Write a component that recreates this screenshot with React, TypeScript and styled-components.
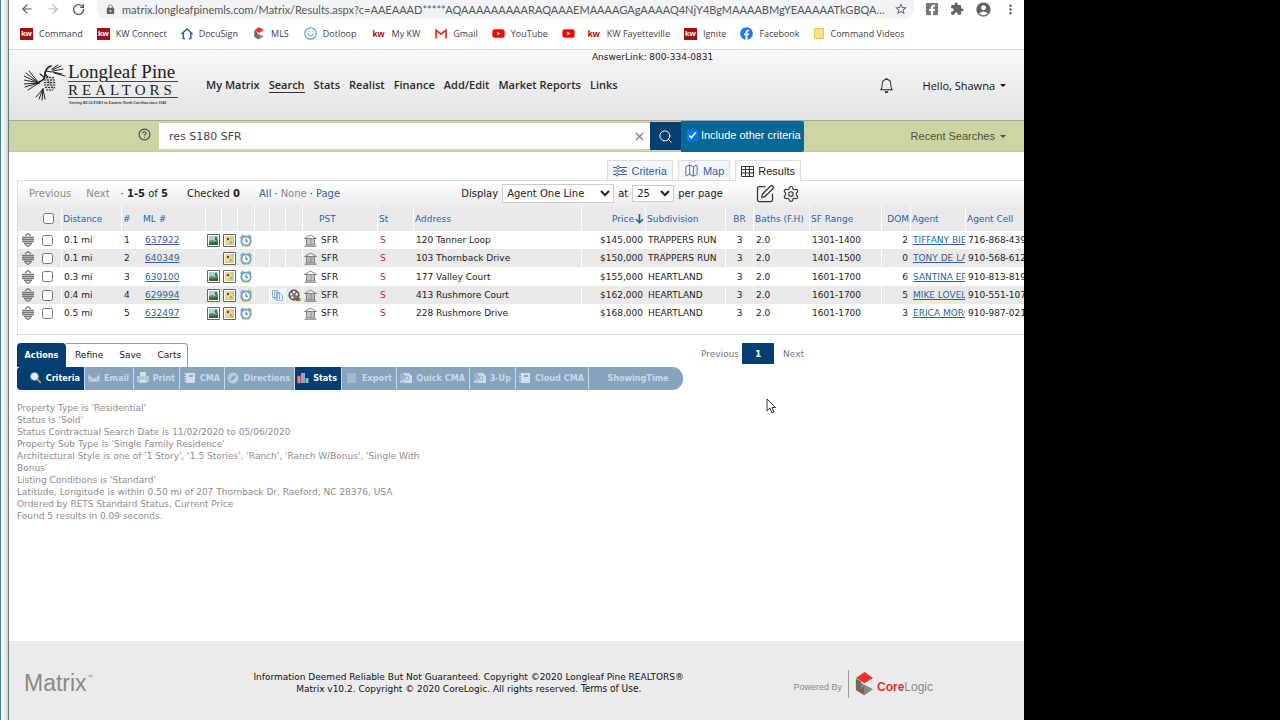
import React from 'react';
import styled, { createGlobalStyle, css } from 'styled-components';
import { ArrowLeft, ArrowRight, RotateCw, Search, X, Map as MapIcon, CircleHelp, SquarePen, Settings } from 'lucide-react';
import { MdLock, MdStarBorder, MdExtension, MdAccountCircle, MdMoreVert } from 'react-icons/md';
import { FaFacebookSquare, FaFacebook, FaYoutube } from 'react-icons/fa';
import { BsBell } from 'react-icons/bs';

const verdana = "'DejaVu Sans', Verdana, sans-serif";
const tahoma = "'DejaVu Sans Condensed', Tahoma, sans-serif";
const segoe = "'Open Sans', 'Segoe UI', sans-serif";
const arial = "'Liberation Sans', Arial, sans-serif";
const navy = '#053f72';
const link = '#2d62a8';

const GlobalStyle = createGlobalStyle`
  * { box-sizing: border-box; }
  body { margin: 0; background: #000; font-family: ${verdana}; font-size: 9px; color: #222; }
  button { font: inherit; color: inherit; background: none; border: 0; padding: 0; cursor: pointer; }
  a { color: inherit; text-decoration: none; }
  svg { display: block; flex: none; }
  input[type='checkbox'] { margin: 0; width: 11px; height: 11px; }
`;

const Screen = styled.div`
  display: grid;
  grid-template-columns: 9px minmax(0, 1fr) 20%;
  min-height: 100vh;
  overflow: hidden;
`;
const DesktopEdge = styled.div`
  border-left: 1px solid #4d7f92;
  border-right: 1px solid #757575;
  background: linear-gradient(90deg, #f4f6f8 0, #e9ebee 60%, #c9cbce 100%);
`;
const Browser = styled.div`
  display: flex;
  flex-direction: column;
  background: #fff;
`;

/* Browser chrome */
const AddressRow = styled.div`
  display: flex;
  align-items: center;
  height: 18px;
  padding: 0 6px 0 11px;
  color: #5f6368;
`;
const ChromeButton = styled.button<{ $dim?: boolean }>`
  display: flex;
  margin-right: 12px;
  color: ${(p) => (p.$dim ? '#b5b7ba' : '#55585c')};
`;
const AddressPill = styled.div`
  display: flex;
  flex: 1;
  align-items: center;
  min-width: 0;
  height: 20px;
  padding: 0 6px 0 8px;
  gap: 6px;
  background: #f1f3f4;
  border-radius: 0 0 10px 10px;
`;
const AddressInput = styled.input`
  flex: 1;
  min-width: 0;
  height: 18px;
  border: 0;
  padding: 0;
  background: none;
  color: #54575b;
  font: 11px Lato, sans-serif;
  text-overflow: ellipsis;
`;
const ChromeIcons = styled.div`
  display: flex;
  align-items: center;
  gap: 11px;
  margin-left: 11px;
  color: #5f6368;
`;
const Bookmarks = styled.nav`
  display: flex;
  align-items: center;
  height: 32px;
  padding: 0 11px;
  border-bottom: 1px solid #dcdcdc;
  font: 9px ${segoe};
  color: #3f4246;
`;
const Bookmark = styled.a<{ $gap: number }>`
  display: flex;
  align-items: center;
  gap: 6px;
  margin-right: ${(p) => p.$gap}px;
  white-space: nowrap;
`;
const KwMark = styled.span<{ $boxed?: boolean }>`
  display: grid;
  place-items: center;
  width: 13px;
  height: 12px;
  font: bold 8px ${arial};
  line-height: 10px;
  ${(p) =>
    p.$boxed
      ? css`
          background: #a90b12;
          color: #fff;
        `
      : css`
          width: 14px;
          color: #b40101;
          font-size: 9px;
        `}
`;
const NoteIcon = styled.span`
  width: 10px;
  height: 11px;
  background: #fbe283;
  border: 1px solid #e5c65c;
`;

/* Site header */
const Header = styled.header`
  padding-bottom: 12px;
  border-bottom: 1px solid #a7a99a;
  background: linear-gradient(#f7f7f7, #e3e3e4);
`;
const AnswerLink = styled.div`
  padding: 2px 0 0 272px;
  text-align: center;
  line-height: 10px;
`;
const HeaderRow = styled.div`
  display: flex;
  align-items: center;
  height: 46px;
  padding: 0 18px 0 15px;
`;
const MainNav = styled.nav`
  display: flex;
  gap: 9px;
  margin-left: 22px;
  font: 600 11px ${segoe};
  color: #2a2a2a;
`;
const NavLink = styled.a<{ $active?: boolean }>`
  line-height: 15px;
  border-bottom: 1px solid ${(p) => (p.$active ? '#333' : 'transparent')};
`;
const HeaderTools = styled.div`
  display: flex;
  align-items: center;
  gap: 29px;
  margin-left: auto;
`;
const Menu = styled.button<{ $sans?: boolean }>`
  display: flex;
  align-items: center;
  gap: 5px;
  font: ${(p) => (p.$sans ? `11px ${arial}` : `500 11px ${segoe}`)};
  color: ${(p) => (p.$sans ? '#4d5238' : '#111')};
  &::after {
    content: '';
    border: 3px solid transparent;
    border-top-color: currentColor;
    border-bottom: 0;
  }
`;

/* Speed search */
const SpeedBar = styled.form`
  display: flex;
  align-items: center;
  height: 31px;
  padding: 0 18px 0 129px;
  background: #ccd4a4;
  border-bottom: 1px solid #c3c9a8;
`;
const HelpButton = styled.button`
  margin: 0 8px 3px 0;
  color: #444;
`;
const SpeedField = styled.div`
  display: flex;
  flex: 1;
  align-items: center;
  height: 26px;
  padding: 0 4px 0 10px;
  background: #fff;
  color: #777;
`;
const SpeedInput = styled.input`
  flex: 1;
  min-width: 0;
  border: 0;
  padding: 0;
  outline: 0;
  font: 11px ${verdana};
  color: #444;
`;
const SearchButton = styled.button`
  display: grid;
  place-items: center;
  width: 31px;
  height: 28px;
  background: ${navy};
  color: #fff;
`;
const IncludeLabel = styled.label`
  display: flex;
  align-items: center;
  gap: 3px;
  height: 31px;
  padding: 0 3px 2px 6px;
  margin-right: 107px;
  background: #066799;
  border-radius: 0 2px 2px 0;
  color: #fff;
  font: 11px ${arial};
  white-space: nowrap;
`;

/* Results */
const Main = styled.main`
  flex: 1;
  padding: 8px 0 24px 8px;
`;
const ViewTabs = styled.div`
  display: flex;
  justify-content: flex-end;
  gap: 5px;
  padding-right: 223px;
`;
const ViewTab = styled.button<{ $active?: boolean }>`
  display: flex;
  align-items: center;
  gap: 4px;
  height: ${(p) => (p.$active ? 21 : 20)}px;
  padding: 0 5px;
  margin-bottom: ${(p) => (p.$active ? -1 : 0)}px;
  border: 1px solid #ddd;
  border-bottom: 0;
  background: ${(p) => (p.$active ? '#fff' : '#f6f6f8')};
  color: ${(p) => (p.$active ? '#222' : link)};
  font: 11px ${arial};
`;
const Panel = styled.section`
  padding-bottom: 12px;
  border: 1px solid #dcdcdc;
  border-right: 0;
  overflow: hidden;
`;
const Toolbar = styled.div`
  display: flex;
  align-items: center;
  height: 25px;
  padding: 0 224px 0 11px;
  background: linear-gradient(#fff, #ececec);
  font-size: 10px;
  white-space: nowrap;
`;
const PageButton = styled.button<{ $gap: number }>`
  margin-right: ${(p) => p.$gap}px;
  color: #8a8a8a;
`;
const Count = styled.span`
  margin-right: 19px;
`;
const PickLinks = styled.div`
  display: flex;
  gap: 3px;
`;
const PickLink = styled.a<{ $muted?: boolean }>`
  color: ${(p) => (p.$muted ? '#888' : link)};
`;
const DisplayTools = styled.div`
  display: flex;
  align-items: center;
  gap: 4px;
  margin-left: auto;
`;
const Picker = styled.select<{ $size: 'wide' | 'small' }>`
  width: ${(p) => (p.$size === 'wide' ? 112 : 42)}px;
  height: ${(p) => (p.$size === 'wide' ? 19 : 17)}px;
  padding: 0;
  border: 1px solid #ccc;
  background: #fff;
  color: #222;
  font: 10px ${verdana};
`;
const ToolIcons = styled.div`
  display: flex;
  align-items: center;
  gap: 7px;
  margin-left: 28px;
  color: #333;
`;

/* Results are wider than the window: the last column runs off its edge. */
const Grid = styled.table`
  width: calc(100% + 16px);
  table-layout: fixed;
  border-collapse: separate;
  border-spacing: 0;
  white-space: nowrap;
`;
const Col = styled.col<{ $w?: number }>`
  width: ${(p) => (p.$w ? `${p.$w}px` : 'auto')};
`;
type CellProps = { $align?: 'left' | 'right' | 'center'; $gap?: boolean };
const Th = styled.th<CellProps>`
  height: 25px;
  padding: 0 1px;
  overflow: hidden;
  background: #e9e9e9;
  border-left: ${(p) => (p.$gap === false ? 0 : 1)}px solid #fff;
  color: ${link};
  font-weight: normal;
  text-align: ${(p) => p.$align ?? 'left'};
`;
const Tr = styled.tr`
  height: 18px;
  &:nth-child(even) { background: #e9e9e9; }
  &:nth-child(3n) { height: 19px; }
`;
const Td = styled.td<CellProps>`
  padding: 0 2px 0 ${(p) => (p.$gap ? 2 : 3)}px;
  overflow: hidden;
  border-left: ${(p) => (p.$gap ? '1px solid #fff' : 0)};
  text-align: ${(p) => p.$align ?? 'left'};
  line-height: 12px;
`;
const IconTd = styled(Td)`
  padding: 0;
  & > svg { margin: 0 auto; }
`;
const RowLink = styled.a`
  color: ${link};
  text-decoration: underline;
`;
const Sold = styled.span`
  color: #c01848;
`;
const CheckCell = styled.span`
  display: flex;
  padding-left: 4px;
`;
const SortLabel = styled.span`
  display: flex;
  align-items: center;
  justify-content: flex-end;
  gap: 1px;
`;

/* Actions and pager */
const BottomBar = styled.div`
  display: flex;
  align-items: flex-start;
  margin-top: 8px;
`;
const Actions = styled.div`
  width: 666px;
`;
const ActionTabs = styled.div`
  display: flex;
  height: 24px;
`;
const ActionTab = styled.button`
  width: 49px;
  border-radius: 4px 4px 0 0;
  background: ${navy};
  color: #fff;
  font: bold 9px ${tahoma};
`;
const OtherTabs = styled.div`
  display: flex;
  gap: 16px;
  padding: 0 6px 1px 9px;
  border: 1px solid #999;
  border-width: 1px 1px 0 0;
  border-radius: 0 4px 0 0;
  color: #222;
`;
const ActionBar = styled.div`
  display: flex;
  height: 23px;
  gap: 1px;
  overflow: hidden;
  border-radius: 4px 11px 11px 4px;
  background: #c9d9e6;
`;
const ActionButton = styled.button<{ $w?: number; $on?: boolean }>`
  display: flex;
  flex: ${(p) => (p.$w ? `0 0 ${p.$w}px` : '1')};
  align-items: center;
  justify-content: ${(p) => (p.$w ? 'flex-end' : 'center')};
  gap: 4px;
  padding: ${(p) => (p.$w ? '0 4px 1px 0' : '0 0 1px 4px')};
  background: ${(p) => (p.$on ? navy : '#88a3bd')};
  color: ${(p) => (p.$on ? '#fff' : '#c8d9e8')};
  font: bold 9px ${tahoma};
  white-space: nowrap;
`;
const Pager = styled.div`
  display: flex;
  align-items: center;
  height: 21px;
  margin-left: 18px;
  color: #777;
`;
const PageNumber = styled.button`
  width: 32px;
  height: 21px;
  margin: 0 9px 0 3px;
  background: ${navy};
  color: #fff;
  font-weight: bold;
`;
const Criteria = styled.div`
  max-width: 410px;
  margin-top: 12px;
  color: #8c8c8c;
  line-height: 12px;
`;

/* Footer */
const Footer = styled.footer`
  display: flex;
  align-items: center;
  height: 79px;
  padding: 6px 91px 0 15px;
  background: #ebebeb;
`;
const MatrixMark = styled.div`
  display: flex;
  width: 120px;
  color: #8d8988;
  font: 23px ${arial};
`;
const Tm = styled.span`
  font-size: 6px;
  line-height: 14px;
`;
const Legal = styled.div`
  flex: 1;
  padding-bottom: 2px;
  color: #111;
  line-height: 12px;
  text-align: center;
`;
const Terms = styled.a`
  font-size: 10px;
  font-family: ${tahoma};
`;
const Powered = styled.div`
  display: flex;
  align-items: center;
  gap: 6px;
  color: #8a8a8a;
  font: 9px ${arial};
`;
const PoweredText = styled.span`
  padding-top: 6px;
`;
const CoreLogo = styled.div`
  display: flex;
  align-items: center;
  gap: 3px;
  height: 28px;
  padding-left: 6px;
  border-left: 1px solid #999;
`;
const CoreName = styled.span`
  padding-top: 6px;
  font-size: 12px;
`;
const Core = styled.b`
  color: #e8332c;
`;
const Pointer = styled.svg`
  position: absolute;
  left: 766px;
  top: 398px;
`;

const PineLogo = () => (
  <svg width="160" height="46" viewBox="0 0 160 46" role="img" aria-label="Longleaf Pine Realtors">
    <g fill="none" stroke="#222" strokeWidth="1" strokeLinecap="round">
      <path d="M15 21 L0 14 M15 21 L2 11 M15 21 L5 9 M15 21 L0 18 M15 21 L0 22 M15 21 L1 25 M15 21 L4 28" />
      <path d="M19 27 L12 35 M19 27 L15 37 M19 27 L18 38 M19 27 L21 37" />
      <path d="M28 8 L37 4 M29 9 L39 7 M29 10 L38 12 M30 11 L41 14 M28 7 L34 3" />
      <path d="M15 20 Q22 18 21 11 Q22 6 27 4" strokeWidth="1.8" />
      <path d="M20 15 L16 12 M21 12 L25 16 M22 9 L28 10" strokeWidth="1.200" />
    </g>
    <ellipse cx="26" cy="22" rx="6" ry="7.500" fill="#d0d0d0" />
    <g fill="none" stroke="#333" strokeWidth="1" strokeDasharray="2 1">
      <path d="M22 15.500 H30 M20 18 H32 M20 20.500 H32 M20 23 H32 M21 25.500 H31 M22 28 H29" />
      <path d="M22 16 L31 28 M30 15 L21 27" strokeWidth=".6" />
    </g>
    <g fill="#222" fontFamily="'Liberation Serif', serif">
      <text x="44" y="16" fontSize="19">Longleaf Pine</text>
      <text x="44" y="33" fontSize="15" letterSpacing="4">REALTORS</text>
      <text x="45" y="42" fontSize="4" fontWeight="bold" fontStyle="italic" fill="#333">Serving REALTORS in Eastern North Carolina since 1946</text>
    </g>
    <path d="M44 19.500 H74 M82 19.500 H154 M44 35.500 H154" stroke="#444" />
  </svg>
);
const PhotoIcon = () => (
  <svg width="13" height="13" viewBox="0 0 13 13">
    <path d="M.5.5h12v12H.5z" fill="#fff" stroke="#666" />
    <path d="M2 2h9v9H2z" fill="#a9cfe6" />
    <path d="M2 7l3-1 3 1 3-2v6H2z" fill="#4d9a45" />
    <path d="M2 9l9-1v3H2z" fill="#2a6a30" />
    <path d="M8 3h2v3H8z" fill="#2f7a2c" />
  </svg>
);
const MapPinIcon = () => (
  <svg width="13" height="13" viewBox="0 0 13 13">
    <path d="M.5.5h12v12H.5z" fill="#fff" stroke="#666" />
    <path d="M2 2h9v9H2z" fill="#e6df86" />
    <path d="M7 2h4v5H9z" fill="#b6c9d6" />
    <path d="M2 11l9-4v4z" fill="#c5d08a" />
    <circle cx="5" cy="5" r="1.200" fill="#a3231c" />
    <path d="M7 7h2v2H7z" fill="#e09a3c" />
  </svg>
);
const ClockIcon = () => (
  <svg width="14" height="13" viewBox="0 0 14 13">
    <path d="M1.500 4l3-3" stroke="#8db4d8" strokeWidth="2.200" />
    <path d="M12.500 4l-3-3" stroke="#a9c25a" strokeWidth="2.200" />
    <circle cx="7" cy="7" r="4.700" fill="#e8f3fc" stroke="#6b9cc8" strokeWidth="1.800" />
    <path d="M7 4.500v2.800h2" fill="none" stroke="#2f6ca8" strokeWidth=".9" />
    <path d="M3 11.500l8 0" stroke="#9cb94a" strokeWidth="1.400" />
  </svg>
);
const PagesIcon = () => (
  <svg width="13" height="13" viewBox="0 0 13 13">
    <path d="M0 0h13v13H0z" fill="#fbfcff" />
    <g fill="#eaf2fb" stroke="#84a9d3" strokeWidth=".9">
      <path d="M1.500 1.500h5v7h-5zM3.500 3h5v7h-5zM5.500 4.500h4l2 2v5h-6z" />
    </g>
  </svg>
);
const ReelIcon = () => (
  <svg width="13" height="13" viewBox="0 0 13 13">
    <circle cx="6" cy="6" r="5" fill="#777" stroke="#333" />
    <g fill="#eee"><circle cx="6" cy="3" r="1.200" /><circle cx="3.200" cy="5.200" r="1.200" /><circle cx="8.800" cy="5.200" r="1.200" /><circle cx="4.300" cy="8.500" r="1.200" /></g>
    <path d="M7 8h3v4H8z" fill="#c8472b" />
    <path d="M10 9h2.500v3H10z" fill="#5c9a2e" />
  </svg>
);
const BankIcon = () => (
  <svg width="13" height="13" viewBox="0 0 13 13" fill="none" stroke="#777" strokeWidth=".9">
    <path d="M.5 4.500L6.500 1l6 3.500zM.5 12.300h12M1.500 11h10M2.500 5v6M4 5v6M6 5v6M7.200 5v6M9 5v6M10.500 5v6" />
  </svg>
);
const DragIcon = () => (
  <svg width="12" height="14" viewBox="0 0 12 14">
    <path d="M3 3l3-2.500L9 3M3 11.500l3 2L9 11.500" fill="none" stroke="#777" strokeWidth="1.200" />
    <path d="M0 4.500h12M0 6.500h12M0 8.500h12M2 10.500h8" stroke="#777" strokeWidth="1.400" />
  </svg>
);
const CubeLogo = ({ w, h }: { w: number; h: number }) => (
  <svg width={w} height={h} viewBox="0 0 20 28">
    <path d="M10 0L20 7l-10 6L0 7z" fill="#f0302a" />
    <path d="M0 8l6 3v9l4-5v12L0 21z" fill="#7d6f68" />
    <path d="M10 15l10 5-10 7z" fill="#93877f" />
    <path d="M0 8l10 7v12L0 21z" fill="#6e625c" opacity=".7" />
  </svg>
);
const GmailIcon = () => (
  <svg width="12" height="10" viewBox="0 0 12 10">
    <path d="M1 1h10v8H1z" fill="#f3efee" />
    <path d="M1 9.500V1.200l5 4 5-4v8.300" fill="none" stroke="#d0392d" strokeWidth="1.700" />
  </svg>
);
const DocuIcon = () => (
  <svg width="12" height="12" viewBox="0 0 12 12" fill="none" stroke="#2365a5" strokeWidth="1.500">
    <path d="M4 10.500H2.200v-5L1 5.500 6 1l5 4.500H9.800v5H8" />
  </svg>
);
const DotloopIcon = () => (
  <svg width="13" height="13" viewBox="0 0 13 13" fill="none" stroke="#5aa5dc" strokeWidth="1.200">
    <circle cx="6.500" cy="6.500" r="5.700" />
    <path d="M3.500 6.500q3 5 6 0M4.500 4.500v.5M8.500 4.500v.5" />
  </svg>
);
const SlidersIcon = () => (
  <svg width="14" height="12" viewBox="0 0 14 12" fill="#fff" stroke="#2d62a8">
    <path d="M0 2.500h14M0 6h14M0 9.500h14" />
    <circle cx="5" cy="2.500" r="1.400" />
    <circle cx="10" cy="6" r="1.400" />
    <circle cx="4" cy="9.500" r="1.400" />
  </svg>
);
const TableIcon = () => (
  <svg width="13" height="11" viewBox="0 0 13 11" fill="none" stroke="#333">
    <path d="M.5.5h12v10H.5zM.5 3.500h12M.5 7h12M4.500.5v10M8.500.5v10" />
  </svg>
);
const SortArrow = () => (
  <svg width="9" height="10" viewBox="0 0 9 10" fill="none" stroke="#1d5fa0" strokeWidth="1.600">
    <path d="M4.500 0v8.500M1 5.200l3.500 3.500L8 5.200" />
  </svg>
);
const MagnifierIcon = () => (
  <svg width="12" height="12" viewBox="0 0 12 12">
    <path d="M7 7l4 4" stroke="#c78a55" strokeWidth="2" />
    <circle cx="4.500" cy="4.500" r="3.800" fill="#dceefb" stroke="#9fc0dd" />
  </svg>
);
const StatsIcon = () => (
  <svg width="12" height="12" viewBox="0 0 12 12">
    <path d="M.5 4h3v7h-3z" fill="#f0888a" stroke="#d8454a" />
    <path d="M4 1h4v10H4z" fill="#7da8ec" />
    <path d="M8.500 6h3v5h-3z" fill="#8fca88" />
  </svg>
);
const glyphs: Record<string, React.ReactNode> = {
  mail: <path d="M0 2h12v8H0zM0 2l6 4.500L12 2M0 10l4-4M12 10L8 6" fill="#c4d3e0" stroke="#93abc2" />,
  print: <><path d="M3 0h6v4H3z" fill="#d5e0e9" /><path d="M0 4h12v6H0z" fill="#b9cad9" /><path d="M2 7h8v4H2z" fill="#d9e3eb" stroke="#93abc2" strokeWidth=".6" /></>,
  book: <><path d="M2 1h9v10H2z" fill="#d3dee8" /><path d="M0 2h2M0 4.500h2M0 7h2M0 9.500h2" stroke="#c4d3e0" /><path d="M5 3h4v2H5z" fill="#8fa8c0" /></>,
  compass: <><circle cx="6" cy="6" r="5.500" fill="#bccdda" /><path d="M9 3L7 7 3 9l2-4z" fill="#7f9bb6" /></>,
  sheet: <path d="M1 1h9v10H1z" fill="#a3b9cd" />,
  report: <><path d="M3 1h6l3 3v7H3z" fill="#d0dce6" /><path d="M0 2h5v5H0z" fill="#9fb5ca" /><circle cx="7" cy="6" r="2" fill="none" stroke="#8ea8c0" /><path d="M0 8h5v3H0z" fill="#b9cad9" /></>,
};
const Glyph = ({ name }: { name: string }) => (
  <svg width="12" height="12" viewBox="0 0 12 12">{glyphs[name]}</svg>
);

const widths = [20, 23, 60, 21, 63, 16, 16, 17, 15, 16, 17, 16, 59, 36, 0, 64, 80, 28, 56, 72, 29, 55, 75];
const rows = [
  { d: '0.1 mi', ml: '637922', photo: true, addr: '120 Tanner Loop', price: '$145,000', sub: 'TRAPPERS RUN', sf: '1301-1400', dom: 2, agent: 'TIFFANY BIE', cell: '716-868-439' },
  { d: '0.1 mi', ml: '640349', photo: false, addr: '103 Thornback Drive', price: '$150,000', sub: 'TRAPPERS RUN', sf: '1401-1500', dom: 0, agent: 'TONY DE LA', cell: '910-568-612' },
  { d: '0.3 mi', ml: '630100', photo: true, addr: '177 Valley Court', price: '$155,000', sub: 'HEARTLAND', sf: '1601-1700', dom: 6, agent: 'SANTINA EP', cell: '910-813-819' },
  { d: '0.4 mi', ml: '629994', photo: true, extra: true, addr: '413 Rushmore Court', price: '$162,000', sub: 'HEARTLAND', sf: '1601-1700', dom: 5, agent: 'MIKE LOVEL', cell: '910-551-107' },
  { d: '0.5 mi', ml: '632497', photo: true, addr: '228 Rushmore Drive', price: '$168,000', sub: 'HEARTLAND', sf: '1601-1700', dom: 3, agent: 'ERICA MORG', cell: '910-987-021' },
];
const actions: { label: string; w?: number; on?: boolean; icon?: React.ReactNode }[] = [
  { label: 'Criteria', w: 67, on: true, icon: <MagnifierIcon /> },
  { label: 'Email', w: 48, icon: <Glyph name="mail" /> },
  { label: 'Print', w: 45, icon: <Glyph name="print" /> },
  { label: 'CMA', w: 44, icon: <Glyph name="book" /> },
  { label: 'Directions', w: 69, icon: <Glyph name="compass" /> },
  { label: 'Stats', w: 46, on: true, icon: <StatsIcon /> },
  { label: 'Export', w: 54, icon: <Glyph name="sheet" /> },
  { label: 'Quick CMA', w: 72, icon: <Glyph name="report" /> },
  { label: '3-Up', w: 45, icon: <Glyph name="report" /> },
  { label: 'Cloud CMA', w: 72, icon: <Glyph name="book" /> },
  { label: 'ShowingTime' },
];
const criteria = [
  "Property Type is 'Residential'",
  "Status is 'Sold'",
  'Status Contractual Search Date is 11/02/2020 to 05/06/2020',
  "Property Sub Type is 'Single Family Residence'",
  "Architectural Style is one of '1 Story', '1.5 Stories', 'Ranch', 'Ranch W/Bonus', 'Single With Bonus'",
  "Listing Conditions is 'Standard'",
  'Latitude, Longitude is within 0.50 mi of 207 Thornback Dr, Raeford, NC 28376, USA',
  'Ordered by RETS Standard Status, Current Price',
  'Found 5 results in 0.09 seconds.',
];

export default function App() {
  return (
    <Screen>
      <GlobalStyle />
      <DesktopEdge />
      <Browser>
        <AddressRow>
          <ChromeButton aria-label="Back"><ArrowLeft size={14} /></ChromeButton>
          <ChromeButton $dim aria-label="Forward"><ArrowRight size={14} /></ChromeButton>
          <ChromeButton aria-label="Reload"><RotateCw size={13} strokeWidth={2.5} /></ChromeButton>
          <AddressPill>
            <MdLock size={11} />
            <AddressInput
              aria-label="Address"
              defaultValue="matrix.longleafpinemls.com/Matrix/Results.aspx?c=AAEAAAD*****AQAAAAAAAAARAQAAAEMAAAAGAgAAAAQ4NjY4BgMAAAABMgYEAAAAATkGBQAA..."
            />
            <MdStarBorder size={14} />
          </AddressPill>
          <ChromeIcons>
            <FaFacebookSquare size={14} color="#777" />
            <MdExtension size={14} />
            <MdAccountCircle size={17} />
            <MdMoreVert size={15} />
          </ChromeIcons>
        </AddressRow>
        <Bookmarks>
          <Bookmark href="#" $gap={14}><KwMark $boxed>kw</KwMark>Command</Bookmark>
          <Bookmark href="#" $gap={14}><KwMark $boxed>kw</KwMark>KW Connect</Bookmark>
          <Bookmark href="#" $gap={15}><DocuIcon />DocuSign</Bookmark>
          <Bookmark href="#" $gap={15}><CubeLogo w={12} h={13} />MLS</Bookmark>
          <Bookmark href="#" $gap={15}><DotloopIcon />Dotloop</Bookmark>
          <Bookmark href="#" $gap={15}><KwMark>kw</KwMark>My KW</Bookmark>
          <Bookmark href="#" $gap={14}><GmailIcon />Gmail</Bookmark>
          <Bookmark href="#" $gap={14}><FaYoutube size={13} color="#f00" />YouTube</Bookmark>
          <Bookmark href="#" $gap={12} aria-label="YouTube channel"><FaYoutube size={13} color="#f00" /></Bookmark>
          <Bookmark href="#" $gap={14}><KwMark>kw</KwMark>KW Fayetteville</Bookmark>
          <Bookmark href="#" $gap={14}><KwMark $boxed>kw</KwMark>Ignite</Bookmark>
          <Bookmark href="#" $gap={15}><FaFacebook size={13} color="#1877f2" />Facebook</Bookmark>
          <Bookmark href="#" $gap={0}><NoteIcon />Command Videos</Bookmark>
        </Bookmarks>

        <Header>
          <AnswerLink>AnswerLink: 800-334-0831</AnswerLink>
          <HeaderRow>
            <PineLogo />
            <MainNav>
              {['My Matrix', 'Search', 'Stats', 'Realist', 'Finance', 'Add/Edit', 'Market Reports', 'Links'].map((t) => (
                <NavLink key={t} href="#" $active={t === 'Search'}>{t}</NavLink>
              ))}
            </MainNav>
            <HeaderTools>
              <BsBell size={15} aria-label="Notifications" />
              <Menu>Hello, Shawna</Menu>
            </HeaderTools>
          </HeaderRow>
        </Header>

        <SpeedBar onSubmit={(e) => e.preventDefault()}>
          <HelpButton type="button" aria-label="Help"><CircleHelp size={13} /></HelpButton>
          <SpeedField>
            <SpeedInput aria-label="Speed search" defaultValue="res S180 SFR" />
            <button type="button" aria-label="Clear"><X size={13} /></button>
          </SpeedField>
          <SearchButton aria-label="Search"><Search size={15} strokeWidth={1.6} /></SearchButton>
          <IncludeLabel><input type="checkbox" defaultChecked />Include other criteria</IncludeLabel>
          <Menu type="button" $sans>Recent Searches</Menu>
        </SpeedBar>

        <Main>
          <ViewTabs>
            <ViewTab><SlidersIcon />Criteria</ViewTab>
            <ViewTab><MapIcon size={15} strokeWidth={1.4} />Map</ViewTab>
            <ViewTab $active><TableIcon />Results</ViewTab>
          </ViewTabs>
          <Panel>
            <Toolbar>
              <PageButton $gap={15}>Previous</PageButton>
              <PageButton $gap={11}>Next</PageButton>
              <Count>· <b>1-5</b> of <b>5</b></Count>
              <Count>Checked <b>0</b></Count>
              <PickLinks>
                <PickLink href="#">All</PickLink>·<PickLink href="#" $muted>None</PickLink>·<PickLink href="#">Page</PickLink>
              </PickLinks>
              <DisplayTools>
                <label htmlFor="display">Display</label>
                <Picker id="display" $size="wide"><option>Agent One Line</option></Picker>
                <label htmlFor="count">at</label>
                <Picker id="count" $size="small"><option>25</option></Picker>
                <span>per page</span>
                <ToolIcons>
                  <button aria-label="Customize"><SquarePen size={20} strokeWidth={1.5} /></button>
                  <button aria-label="Settings"><Settings size={18} strokeWidth={1.5} /></button>
                </ToolIcons>
              </DisplayTools>
            </Toolbar>
            <Grid>
              <colgroup>{widths.map((w, i) => <Col key={i} $w={w} />)}</colgroup>
              <thead>
                <tr>
                  <Th $gap={false} />
                  <Th $gap={false}><CheckCell><input type="checkbox" aria-label="Check all" /></CheckCell></Th>
                  <Th>Distance</Th>
                  <Th>#</Th>
                  <Th $gap={false}>ML #</Th>
                  <Th /><Th /><Th /><Th /><Th /><Th /><Th />
                  <Th $gap={false}>PST</Th>
                  <Th>St</Th>
                  <Th>Address</Th>
                  <Th $align="right"><SortLabel>Price<SortArrow /></SortLabel></Th>
                  <Th>Subdivision</Th>
                  <Th $align="center">BR</Th>
                  <Th>Baths (F.H)</Th>
                  <Th>SF Range</Th>
                  <Th $align="right">DOM</Th>
                  <Th>Agent</Th>
                  <Th>Agent Cell</Th>
                </tr>
              </thead>
              <tbody>
                {rows.map((r, i) => (
                  <Tr key={r.ml}>
                    <IconTd><DragIcon /></IconTd>
                    <IconTd><CheckCell><input type="checkbox" aria-label={`Check ${r.ml}`} /></CheckCell></IconTd>
                    <Td $gap>{r.d}</Td>
                    <Td>{i + 1}</Td>
                    <Td><RowLink href="#">{r.ml}</RowLink></Td>
                    <IconTd>{r.photo && <PhotoIcon />}</IconTd>
                    <IconTd><MapPinIcon /></IconTd>
                    <IconTd><ClockIcon /></IconTd>
                    <IconTd $gap />
                    <IconTd $gap>{r.extra && <PagesIcon />}</IconTd>
                    <IconTd $gap>{r.extra && <ReelIcon />}</IconTd>
                    <IconTd $gap><BankIcon /></IconTd>
                    <Td>SFR</Td>
                    <Td><Sold>S</Sold></Td>
                    <Td>{r.addr}</Td>
                    <Td $align="right" $gap>{r.price}</Td>
                    <Td>{r.sub}</Td>
                    <Td $align="center" $gap>3</Td>
                    <Td $gap>2.0</Td>
                    <Td>{r.sf}</Td>
                    <Td $align="right" $gap>{r.dom}</Td>
                    <Td><RowLink href="#">{r.agent}</RowLink></Td>
                    <Td>{r.cell}</Td>
                  </Tr>
                ))}
              </tbody>
            </Grid>
          </Panel>

          <BottomBar>
            <Actions>
              <ActionTabs>
                <ActionTab>Actions</ActionTab>
                <OtherTabs><button>Refine</button><button>Save</button><button>Carts</button></OtherTabs>
              </ActionTabs>
              <ActionBar>
                {actions.map((a) => (
                  <ActionButton key={a.label} $w={a.w} $on={a.on}>{a.icon}{a.label}</ActionButton>
                ))}
              </ActionBar>
            </Actions>
            <Pager><button>Previous</button><PageNumber>1</PageNumber><button>Next</button></Pager>
          </BottomBar>
          <Criteria>{criteria.map((c) => <div key={c}>{c}</div>)}</Criteria>
        </Main>

        <Footer>
          <MatrixMark>Matrix<Tm>™</Tm></MatrixMark>
          <Legal>
            Information Deemed Reliable But Not Guaranteed. Copyright ©2020 Longleaf Pine REALTORS®<br />
            Matrix v10.2. Copyright © 2020 CoreLogic. All rights reserved. <Terms href="#">Terms of Use.</Terms>
          </Legal>
          <Powered>
            <PoweredText>Powered By</PoweredText>
            <CoreLogo><CubeLogo w={19} h={24} /><CoreName><Core>Core</Core>Logic</CoreName></CoreLogo>
          </Powered>
        </Footer>
      </Browser>
      <Pointer width="10" height="16" viewBox="0 0 10 16">
        <path d="M1 1v12l3-3 2 5 2-1-2-4.500h3.500z" fill="#fff" stroke="#222" strokeWidth=".9" />
      </Pointer>
    </Screen>
  );
}
